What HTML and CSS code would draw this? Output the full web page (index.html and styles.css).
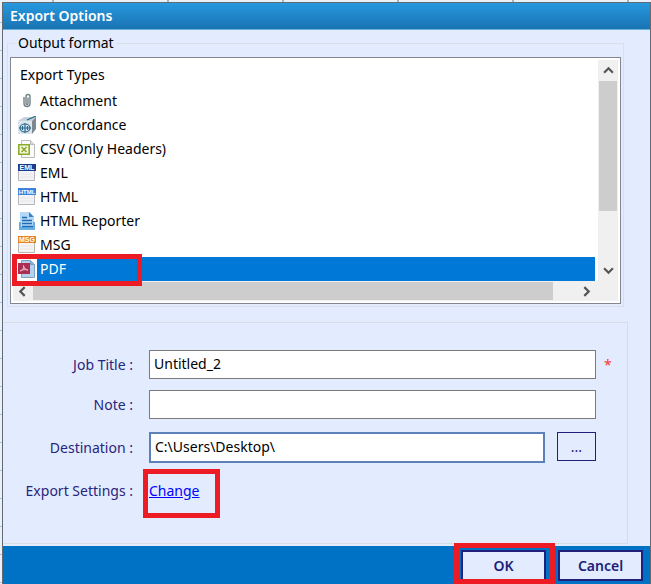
FILE: index.html
```html
<!DOCTYPE html>
<html lang="en">
<head>
<meta charset="utf-8">
<title>Export Options</title>
<link rel="stylesheet" href="styles.css">
</head>
<body>
<form class="dialog">
  <h1 class="titlebar">Export Options</h1>
  <main class="body">
    <fieldset class="formats">
      <legend>Output format</legend>
      <div class="listbox">
        <div class="list">
          <div class="list-head" id="types">Export Types</div>
          <ul class="items" role="listbox" aria-labelledby="types">
            <li role="option"><svg class="icon" viewBox="0 0 18 18"><path d="M6 5v6.500a3 3 0 0 0 6 0V4.500a2 2 0 0 0-4 0v7a1 1 0 0 0 2 0V5.500" fill="none" stroke="#6f8087" stroke-width="1.400"/></svg><span>Attachment</span></li>
            <li role="option"><svg class="icon" viewBox="0 0 18 18"><path d="M0 5 6 1h12l-4 4z" fill="#c7d3dc"/><path d="M9 4 18 0" stroke="#286b87" stroke-width="1.200"/><path d="M14 5l4-4v12l-4 5z" fill="#7c8992"/><path d="M0 5h14v13H0z" fill="#dce5eb"/><g fill="none" stroke="#286b8f" stroke-width="1.200"><ellipse cx="7" cy="12" rx="5" ry="4"/><path d="M1 12h12M7 7v10M4.500 10v4M9.500 10v4"/></g></svg><span>Concordance</span></li>
            <li role="option"><svg class="icon" viewBox="0 0 18 18"><path d="M3.500.5h9l4 4v13h-13z" fill="#fafafa" stroke="#b9bcb9"/><path d="M12.500.5v4h4" fill="#ddd" stroke="#b9bcb9"/><path d="M.8 4.800h10.400v9.400H.8z" fill="#f4f8dc" stroke="#8aab2c" stroke-width="1.600"/><path d="m3.500 7 5 5m0-5-5 5" stroke="#8aa52a" stroke-width="1.500"/></svg><span>CSV (Only Headers)</span></li>
            <li role="option"><svg class="icon" viewBox="0 0 18 18"><path d="M.5 1.500h16v15H.5z" fill="#f3f3f5" stroke="#b5b7bd"/><path d="M2 10h13M2 13h13" stroke="#e6e6ea"/><path d="M0 0h18v7H0z" fill="#173c91"/><text class="tag" x="9" y="6" text-anchor="middle">EML</text></svg><span>EML</span></li>
            <li role="option"><svg class="icon" viewBox="0 0 18 18"><path d="M.5 1.500h16v15H.5z" fill="#f3f3f5" stroke="#b5b7bd"/><path d="M2 10h13M2 13h13" stroke="#e6e6ea"/><path d="M0 0h18v7H0z" fill="#3d82dd"/><text class="tag tag-small" x="9" y="6" text-anchor="middle">HTML</text></svg><span>HTML</span></li>
            <li role="option"><svg class="icon" viewBox="0 0 18 18"><path d="M2 0h9l5 5v10H2z" fill="#b4d8f5"/><path d="M11 0v5h5z" fill="#3a82c4"/><path d="M1 10h2v5h12v-5h2v8H1z" fill="#67aee3"/><path d="M4 5.500h5M4 8.500h10M4 11.500h10M4 14.500h11" stroke="#1f6bb2" stroke-width="1.500"/></svg><span>HTML Reporter</span></li>
            <li role="option"><svg class="icon" viewBox="0 0 18 18"><path d="M.5 1.500h16v15H.5z" fill="#f6f4f2" stroke="#b8b5b2"/><path d="M2 10h13M2 13h13" stroke="#e6e6ea"/><path d="M0 0h18v7H0z" fill="#e98220"/><text class="tag" x="9" y="6" text-anchor="middle">MSG</text></svg><span>MSG</span></li>
            <li role="option" aria-selected="true" class="selected"><svg class="icon" viewBox="0 0 18 18"><path d="M3.500.5h9l4 4v13h-13z" fill="#b4d2ec" stroke="#7d9fc0"/><path d="M12.500.5v4h4" fill="#8db4d6" stroke="#7d9fc0"/><path d="M0 3h12v11H0z" fill="#ab2f53"/><path d="M2 11c3-1 4-3 3.500-5.500C6 8 8 10 10 10 7 9 4 10 2 11" fill="#dd9db8" stroke="#e5b3c8"/></svg><span>PDF</span><i class="mark mark-row"></i></li>
          </ul>
        </div>
        <div class="vbar"><svg class="arrow" viewBox="0 0 10 10"><path d="m1 7 4-4 4 4"/></svg><div class="vthumb"></div><svg class="arrow" viewBox="0 0 10 10"><path d="m1 3 4 4 4-4"/></svg></div>
        <div class="hbar"><svg class="arrow" viewBox="0 0 10 10"><path d="M7 1 3 5l4 4"/></svg><div class="hthumb"></div><svg class="arrow" viewBox="0 0 10 10"><path d="m3 1 4 4-4 4"/></svg></div>
      </div>
    </fieldset>
    <section class="settings">
      <div class="row">
        <label for="job">Job Title :</label>
        <input id="job" type="text" value="Untitled_2" required>
        <span class="required">*</span>
      </div>
      <div class="row">
        <label for="note">Note :</label>
        <input id="note" type="text">
      </div>
      <div class="row row-dest">
        <label for="dest">Destination :</label>
        <div class="picker">
          <input id="dest" class="focused" type="text" value="C:\Users\Desktop\">
          <button type="button" class="browse" aria-label="Browse">...</button>
        </div>
      </div>
      <div class="row row-link">
        <span class="label">Export Settings :</span>
        <span class="linkbox"><a href="#settings">Change</a><i class="mark mark-link"></i></span>
      </div>
    </section>
  </main>
  <footer class="footer">
    <button type="button" class="action">OK<i class="mark mark-ok"></i></button>
    <button type="button" class="action">Cancel</button>
  </footer>
</form>
</body>
</html>
```
FILE: styles.css
```css
* { box-sizing: border-box; }

body {
  margin: 0;
  padding: 2px 0 0 2px;
  background:
    repeating-linear-gradient(90deg, transparent 0 52px, #9fb4cc 52px 54px, transparent 54px 115px),
    repeating-linear-gradient(transparent 0 22px, #a9c4e4 22px 23px, transparent 23px 28px),
    #e9f0fa;
  color: #000;
  font: 14px/20px "Noto Sans", "Open Sans", sans-serif;
  overflow: hidden;
}

.dialog {
  display: flex;
  flex-direction: column;
  min-height: calc(100vh - 2px);
  border: 1px solid #626a74;
  border-bottom: 0;
  background: #e3ecfe;
}

.titlebar {
  height: 27px;
  margin: 0;
  padding: 0 7px;
  border-bottom: 1px solid #69b3e3;
  background: linear-gradient(#2798df, #1973b2);
  color: #fff;
  font-size: 14px;
  line-height: 26px;
  font-weight: 600;
}

.body {
  flex: 1;
  display: flex;
  flex-direction: column;
  gap: 15px;
  padding: 3px 22px 2px 0;
}

.formats {
  min-width: 0;
  margin: 0 4px;
  padding: 4px 2px 2px;
  border: 1px solid #dce0e6;
}

.formats legend {
  margin-left: 5px;
  padding: 0 3px;
}

.listbox {
  display: grid;
  grid-template-columns: minmax(0, 1fr) 20px;
  grid-template-rows: auto 20px;
  padding: 2px;
  border: 1px solid #828790;
  background: #fff;
}

.list { padding: 3px 3px 0 0; }

.list-head {
  padding: 2px 7px;
  height: 26px;
}

.items {
  margin: 0;
  padding: 0 0 0 5px;
  list-style: none;
}

.items li {
  position: relative;
  display: flex;
  align-items: center;
  height: 24px;
}

.items span {
  flex: 1;
  padding-left: 4px;
  line-height: 24px;
}

.items .selected span {
  margin-left: 1px;
  padding-left: 3px;
  background: #0078d7;
  color: #fff;
}

.icon {
  flex: none;
  width: 18px;
  height: 18px;
}

.tag {
  fill: #fff;
  font: bold 7px "Liberation Sans", sans-serif;
}

.tag-small { font-size: 6px; }

.vbar,
.hbar {
  display: flex;
  align-items: center;
  justify-content: space-between;
  background: #f0f0f0;
}

.vbar {
  flex-direction: column;
  padding: 5px 0;
}

.hbar {
  grid-column: 1 / -1;
  padding: 0 26px 0 4px;
}

.arrow {
  flex: none;
  width: 11px;
  height: 11px;
  fill: none;
  stroke: #555;
  stroke-width: 2;
}

.vthumb {
  width: 18px;
  height: 130px;
  margin: 5px 0 auto;
  background: #cdcdcd;
}

.hthumb {
  flex: 0 1 520px;
  height: 18px;
  margin: 0 auto 0 5px;
  background: #cdcdcd;
}

.settings {
  flex: 1;
  display: flex;
  flex-direction: column;
  gap: 11px;
  padding: 27px 31px 20px 0;
  border: 1px solid #d9dde3;
  border-left: 0;
}

.row {
  position: relative;
  display: grid;
  grid-template-columns: 130px minmax(0, 1fr);
  column-gap: 16px;
  align-items: center;
}

.row-dest { margin-top: 2px; }

.row-link { margin-top: 7px; }

.row label,
.label {
  color: #29247c;
  text-align: right;
}

input {
  width: 100%;
  min-width: 0;
  height: 29px;
  padding: 0 4px 2px;
  border: 1px solid #7a7a7a;
  border-radius: 0;
  background: #fff;
  color: #000;
  font: inherit;
  outline: 0;
}

.required {
  position: absolute;
  left: 100%;
  margin-left: 8px;
  color: #f33;
}

.picker {
  display: flex;
  gap: 12px;
}

.focused {
  flex: 1;
  height: 31px;
  border: 2px solid #5c80b8;
}

button {
  position: relative;
  padding: 0;
  border: 1px solid #20207a;
  background: #e3ecfe;
  color: #20207a;
  font: inherit;
}

.browse {
  width: 39px;
  height: 29px;
}

.linkbox {
  position: relative;
  justify-self: start;
}

a { color: #00f; }

.footer {
  display: flex;
  justify-content: flex-end;
  gap: 12px;
  height: 38px;
  padding: 4px 7px 3px;
  background: #0072c6;
}

.action {
  width: 85px;
  height: 31px;
  border-width: 2px;
  font-weight: 600;
}

.mark {
  position: absolute;
  border: 5px solid #ed1c24;
  pointer-events: none;
}

.mark-row {
  left: -6px;
  top: -3px;
  width: 130px;
  height: 32px;
}

.mark-link { inset: -12px -20px -17px -6px; }

.mark-ok { inset: -9px -11px -5px -9px; }
```
